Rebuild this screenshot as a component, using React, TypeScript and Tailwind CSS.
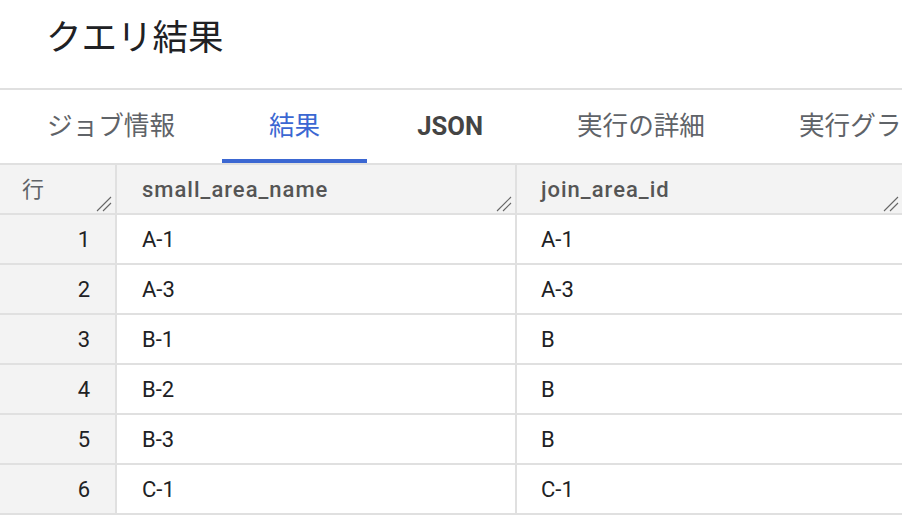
import React from "react";

const rows = [
  { n: 1, name: "A-1", id: "A-1" },
  { n: 2, name: "A-3", id: "A-3" },
  { n: 3, name: "B-1", id: "B" },
  { n: 4, name: "B-2", id: "B" },
  { n: 5, name: "B-3", id: "B" },
  { n: 6, name: "C-1", id: "C-1" },
];

const tabs = [
  { label: "ジョブ情報", active: false, bold: false },
  { label: "結果", active: true, bold: false },
  { label: "JSON", active: false, bold: true },
  { label: "実行の詳細", active: false, bold: false },
  { label: "実行グラフ", active: false, bold: false },
];

const ResizeHandle: React.FC = () => (
  <svg className="absolute right-[3px] bottom-[1px]" width="16" height="16" viewBox="0 0 16 16">
    <path d="M1 15 L15 1" stroke="#666" strokeWidth="1.1" />
    <path d="M7 15 L15 7" stroke="#666" strokeWidth="1.1" />
  </svg>
);

const App: React.FC = () => {
  return (
    <div
      className="w-[902px] h-[516px] overflow-hidden bg-white text-[#202124]"
      style={{ fontFamily: "Roboto, 'Noto Sans CJK JP', sans-serif" }}
    >
      <div className="h-[88px] flex items-center pl-[46px] pb-[10px] text-[35.5px] text-[#202124]">
        クエリ結果
      </div>
      <div className="h-[2px] bg-[#e0e0e0]" />

      <div className="h-[73px] flex items-stretch whitespace-nowrap overflow-hidden">
        {tabs.map((tab) => (
          <div
            key={tab.label}
            className={`relative flex items-center px-[47px] text-[25.6px] shrink-0 ${
              tab.active
                ? "text-[#3b67d2]"
                : tab.bold
                ? "text-[#444] font-bold pl-[50px]"
                : "text-[#5f6368]"
            }`}
          >
            {tab.label}
            {tab.active && <div className="absolute left-0 right-0 bottom-0 h-[4px] bg-[#3b67d2]" />}
          </div>
        ))}
      </div>

      <div className="border-t-2 border-[#e0e0e0]">
        <div className="grid grid-cols-[117px_400px_1fr] h-[50px] bg-[#f3f3f3] border-b-2 border-[#e0e0e0] text-[22px] text-[#555]">
          <div className="relative flex items-center pl-[22px] border-r-2 border-[#e0e0e0] text-[#5f6368]">
            行
            <ResizeHandle />
          </div>
          <div className="relative flex items-center pl-[25px] border-r-2 border-[#e0e0e0] font-medium tracking-[1px]">
            small_area_name
            <ResizeHandle />
          </div>
          <div className="relative flex items-center pl-[24px] font-medium tracking-[1px]">
            join_area_id
            <ResizeHandle />
          </div>
        </div>

        {rows.map((r) => (
          <div
            key={r.n}
            className="grid grid-cols-[117px_400px_1fr] h-[50px] border-b-2 border-[#e0e0e0] text-[22px] text-[#202124]"
          >
            <div className="flex items-center justify-end pr-[25px] bg-[#f3f3f3] border-r-2 border-[#e0e0e0]">
              {r.n}
            </div>
            <div className="flex items-center pl-[25px] border-r-2 border-[#e0e0e0]">{r.name}</div>
            <div className="flex items-center pl-[24px]">{r.id}</div>
          </div>
        ))}
      </div>
    </div>
  );
};

export default App;
